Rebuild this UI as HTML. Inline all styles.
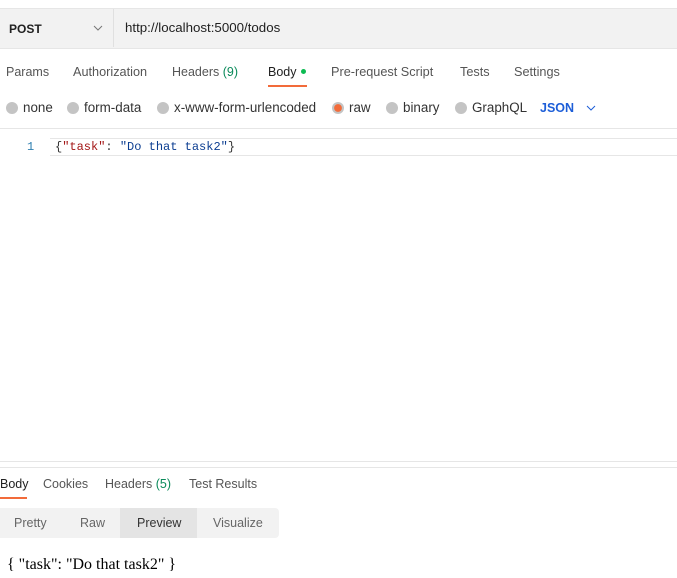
<!DOCTYPE html>
<html><head><style>
body{margin:0;width:677px;height:578px;background:#fff;font-family:"Liberation Sans",sans-serif;position:relative;overflow:hidden;font-size:12px;color:#555}
.a{position:absolute;white-space:nowrap}
.r{position:absolute;width:12px;height:12px;border-radius:50%;background:#c4c4c4;top:102px}
.rl{font-size:13.4px;color:#333;top:100px}
</style></head><body>
<div class="a" style="left:0;top:8px;width:677px;height:39px;background:#f2f2f2;border-top:1px solid #e6e6e6;border-bottom:1px solid #e6e6e6"></div>
<div class="a" style="left:113px;top:9px;width:1px;height:38px;background:#e0e0e0"></div>
<div class="a" style="left:9px;top:22px;font-weight:bold;color:#212121;font-size:12px">POST</div>
<svg class="a" style="left:93px;top:25px" width="10" height="6"><path d="M1 1L5 5L9 1" stroke="#777" fill="none"/></svg>
<div class="a" style="left:125px;top:20px;color:#212121;font-size:13.3px">http://localhost:5000/todos</div>
<div class="a" style="left:6px;top:65px;font-size:12.5px">Params</div>
<div class="a" style="left:73px;top:65px;font-size:12.7px">Authorization</div>
<div class="a" style="left:172px;top:65px;font-size:12.5px">Headers <span style="color:#0a8a5a">(9)</span></div>
<div class="a" style="left:268px;top:65px;font-size:12.5px;color:#212121">Body</div>
<div class="a" style="left:301px;top:69px;width:5px;height:5px;border-radius:50%;background:#0cbb52"></div>
<div class="a" style="left:268px;top:85px;width:39px;height:2px;background:#f26b3a"></div>
<div class="a" style="left:331px;top:65px;font-size:12.7px">Pre-request Script</div>
<div class="a" style="left:460px;top:65px;font-size:12.7px">Tests</div>
<div class="a" style="left:514px;top:65px;font-size:12.7px">Settings</div>
<div class="r" style="left:6px"></div><div class="a rl" style="left:23px">none</div>
<div class="r" style="left:67px"></div><div class="a rl" style="left:84px">form-data</div>
<div class="r" style="left:157px"></div><div class="a rl" style="left:174px">x-www-form-urlencoded</div>
<div class="r" style="left:332px;background:#c4c4c4"><div style="margin:3px;width:6px;height:6px;border-radius:50%;background:#f26b3a;transform:scale(1.3)"></div></div>
<div class="a rl" style="left:349px">raw</div>
<div class="r" style="left:386px"></div><div class="a rl" style="left:403px">binary</div>
<div class="r" style="left:455px"></div><div class="a rl" style="left:472px">GraphQL</div>
<div class="a" style="left:540px;top:101px;font-size:12.5px;color:#1d5ed8;font-weight:bold">JSON</div>
<svg class="a" style="left:586px;top:105px" width="10" height="6"><path d="M1 1L5 5L9 1" stroke="#1d5ed8" fill="none"/></svg>
<div class="a" style="left:0;top:128px;width:677px;height:1px;background:#e6e6e6"></div>
<div class="a" style="left:50px;top:138px;width:627px;height:16px;border-top:1px solid #e6e6e6;border-bottom:1px solid #e6e6e6"></div>
<div class="a" style="left:27px;top:140px;font-family:'Liberation Mono',monospace;font-size:12px;color:#2f7fb0">1</div>
<div class="a" style="left:55px;top:140px;font-family:'Liberation Mono',monospace;font-size:12px;color:#333">{<span style="color:#a31515">"task"</span>: <span style="color:#0b3d91">"Do that task2"</span>}</div>
<div class="a" style="left:0;top:461px;width:677px;height:1px;background:#e6e6e6"></div>
<div class="a" style="left:0;top:467px;width:677px;height:1px;background:#e6e6e6"></div>
<div class="a" style="left:0;top:477px;font-size:12.5px;color:#212121">Body</div>
<div class="a" style="left:0;top:497px;width:27px;height:2px;background:#f26b3a"></div>
<div class="a" style="left:43px;top:477px;font-size:12.5px">Cookies</div>
<div class="a" style="left:105px;top:477px;font-size:12.5px">Headers <span style="color:#0a8a5a">(5)</span></div>
<div class="a" style="left:189px;top:477px;font-size:12.5px">Test Results</div>
<div class="a" style="left:0;top:508px;width:279px;height:30px;background:#f2f2f2;border-radius:0 4px 4px 0"></div>
<div class="a" style="left:120px;top:508px;width:77px;height:30px;background:#e4e4e4"></div>
<div class="a" style="left:14px;top:516px;font-size:12.5px;color:#666">Pretty</div>
<div class="a" style="left:80px;top:516px;font-size:12.5px;color:#666">Raw</div>
<div class="a" style="left:137px;top:516px;font-size:12.5px;color:#333">Preview</div>
<div class="a" style="left:213px;top:516px;font-size:12.5px;color:#666">Visualize</div>
<div class="a" style="left:7px;top:556px;font-family:'Liberation Serif',serif;font-size:16px;color:#000">{ "task": "Do that task2" }</div>
</body></html>
